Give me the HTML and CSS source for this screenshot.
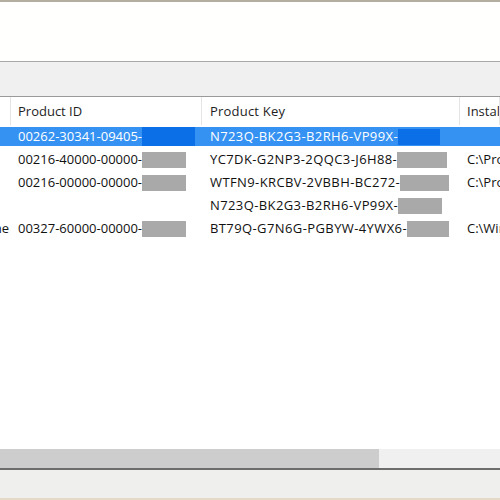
FILE: index.html
```html
<!DOCTYPE html>
<html lang="en">
<head>
  <meta charset="UTF-8">
  <title>Product Keys</title>
  <link rel="stylesheet" href="styles.css">
</head>
<body>
  <div class="window">
    <div class="blank"></div>
    <div class="toolbar"></div>

    <div class="list">
      <div class="grid header">
        <div class="cell first"></div>
        <div class="cell">Product ID</div>
        <div class="cell">Product Key</div>
        <div class="cell">Installation Folder</div>
      </div>

      <div class="grid row selected">
        <div class="cell first"></div>
        <div class="cell">00262-30341-09405-<span class="hide w53 tall"></span></div>
        <div class="cell">N723Q-BK2G3-B2RH6-VP99X-<span class="hide w42"></span></div>
        <div class="cell"></div>
      </div>
      <div class="grid row">
        <div class="cell first"></div>
        <div class="cell">00216-40000-00000-<span class="hide w44"></span></div>
        <div class="cell">YC7DK-G2NP3-2QQC3-J6H88-<span class="hide w50"></span></div>
        <div class="cell">C:\Program Files\Microsoft Office\</div>
      </div>
      <div class="grid row">
        <div class="cell first"></div>
        <div class="cell">00216-00000-00000-<span class="hide w44"></span></div>
        <div class="cell">WTFN9-KRCBV-2VBBH-BC272-<span class="hide w49"></span></div>
        <div class="cell">C:\Program Files\Microsoft Office\</div>
      </div>
      <div class="grid row">
        <div class="cell first"></div>
        <div class="cell"></div>
        <div class="cell">N723Q-BK2G3-B2RH6-VP99X-<span class="hide w44"></span></div>
        <div class="cell"></div>
      </div>
      <div class="grid row">
        <div class="cell first"><span>Windows 10 Home</span></div>
        <div class="cell">00327-60000-00000-<span class="hide w44"></span></div>
        <div class="cell">BT79Q-G7N6G-PGBYW-4YWX6-<span class="hide w42"></span></div>
        <div class="cell">C:\Windows</div>
      </div>
    </div>

    <div class="hscroll">
      <div class="thumb"></div>
    </div>
    <div class="statusbar"></div>
  </div>
</body>
</html>
```

FILE: styles.css
```css
body {
  margin: 0;
  background: #fffffd;
  font-family: "Open Sans", "Noto Sans", sans-serif;
  font-size: 13px;
  color: #111;
  overflow: hidden;
}
.window {
  width: 500px;
  height: 500px;
  display: flex;
  flex-direction: column;
  border-top: 2px solid #b3ae9f;
  box-sizing: border-box;
}
.blank {
  height: 59px;
  flex: none;
}
.toolbar {
  height: 34px;
  flex: none;
  background: #f0f0f0;
  border-top: 1px solid #a9a9a9;
}
.list {
  flex: 1;
  background: #fff;
  border-top: 1px solid #9a9a9a;
  overflow: hidden;
}
.grid {
  display: grid;
  grid-template-columns: 11px 191px 258px 1fr;
  white-space: nowrap;
}
.cell {
  padding-left: 7px;
  overflow: hidden;
}
.cell.first {
  padding: 0 2px 0 0;
  display: flex;
  justify-content: flex-end;
}
.header {
  height: 28px;
  line-height: 28px;
  margin-bottom: 2px;
  color: #1e1e1e;
}
.header .cell {
  border-right: 1px solid #e5e5e5;
}
.header .cell:nth-child(3) {
  padding-left: 8px;
  letter-spacing: 0.2px;
}
.row {
  height: 19px;
  line-height: 19px;
  margin-bottom: 4px;
}
.row .cell:nth-child(3) {
  padding-left: 8px;
  letter-spacing: 0.4px;
}
.selected {
  background: #3592f3;
  color: #fff;
}
.hide {
  display: inline-block;
  height: 16px;
  vertical-align: middle;
  margin-top: -2px;
  background: #a9a9a9;
}
.selected .hide {
  background: #0b6fe7;
}
.hide.tall {
  height: 19px;
}
.w42 { width: 42px; }
.w44 { width: 44px; }
.w49 { width: 49px; }
.w50 { width: 50px; }
.w53 { width: 53px; }
.hscroll {
  height: 19px;
  flex: none;
  background: #f0f0f0;
  display: flex;
}
.thumb {
  width: 379px;
  background: #cdcdcd;
}
.statusbar {
  height: 28px;
  flex: none;
  background: #eff0ed;
  border-top: 2px solid #6d6d6d;
  border-bottom: 2px solid #e3d9c6;
}
```
